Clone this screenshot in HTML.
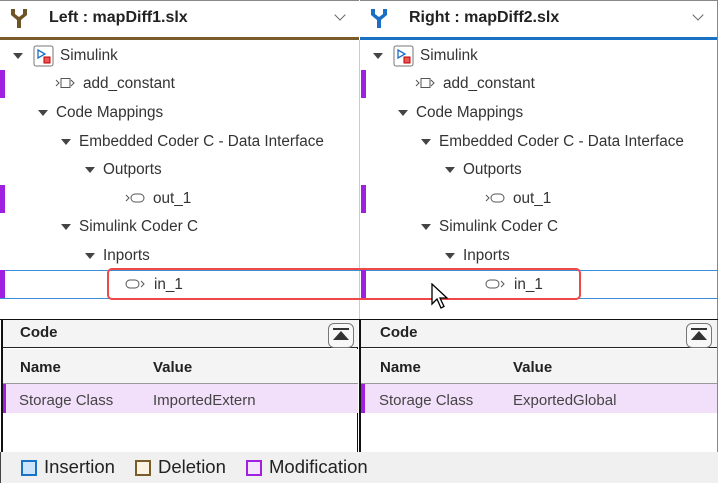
<!DOCTYPE html>
<html><head><style>
*{margin:0;padding:0;box-sizing:border-box}
body{width:718px;height:483px;position:relative;overflow:hidden;background:#fff;font-family:"Liberation Sans",sans-serif;color:#222;font-size:15px}
.abs{position:absolute}
.hdr{top:0;height:37px;background:#fff;font-weight:bold;font-size:16px;color:#111}
.t{position:absolute;white-space:nowrap;line-height:20px}
.tri{display:inline-block;width:0;height:0;border-left:5px solid transparent;border-right:5px solid transparent;border-top:6px solid #444;position:absolute}
.mark{position:absolute;width:5px;height:28px;background:#a020e0}
.chev{position:absolute;width:8px;height:8px;border-right:1.5px solid #666;border-bottom:1.5px solid #666;transform:rotate(45deg)}
</style></head><body>
<div class="abs hdr" style="left:0;width:359px;border-top:1px solid #888"></div>
<div class="abs hdr" style="left:360px;width:358px;border-top:1px solid #888"></div>
<svg class="abs" style="left:8px;top:7px" width="22" height="22" viewBox="0 0 22 22"><path d="M3 2v6l6 5v8h4v-8l6-5V2h-4v5l-4 3-4-3V2z" fill="#6e5526"/></svg>
<svg class="abs" style="left:368px;top:7px" width="22" height="22" viewBox="0 0 22 22"><path d="M3 2v6l6 5v8h4v-8l6-5V2h-4v5l-4 3-4-3V2z" fill="#1a6fc4"/></svg>
<div class="t" style="left:49px;top:8px;font-weight:bold;font-size:16px">Left : mapDiff1.slx</div>
<div class="t" style="left:409px;top:8px;font-weight:bold;font-size:16px">Right : mapDiff2.slx</div>
<div class="chev" style="left:336px;top:11px"></div>
<div class="chev" style="left:694px;top:11px"></div>
<div class="abs" style="left:0;top:37px;width:359px;height:3px;background:#7a5c2a"></div>
<div class="abs" style="left:360px;top:37px;width:358px;height:3px;background:#1a72c4"></div>
<div class="abs" style="left:359px;top:40px;width:1px;height:280px;background:#ccc"></div>
<div class="abs" style="left:717px;top:0;width:1px;height:483px;background:#888"></div>

<div class="abs" style="left:0;top:270px;width:718px;height:1px;background:#3a8fd8"></div>
<div class="abs" style="left:0;top:298px;width:718px;height:1px;background:#3a8fd8"></div>

<div id="L"></div>
<script>
function tree(ox){
 // [triX or null, y, text, textX, icon, iconX]
 var rows=[[13,56,'Simulink',60,'sim',33],[null,84,'add_constant',83,'blk',55],[38,113,'Code Mappings',56],[61,142,'Embedded Coder C - Data Interface',79],[85,170,'Outports',103],[null,199,'out_1',153,'out',125],[61,227,'Simulink Coder C',79],[85,256,'Inports',103],[null,285,'in_1',154,'in',125]];
 var h='';
 rows.forEach(function(r){
  var y=r[1];
  if(r[0]!==null) h+='<span class="tri" style="left:'+(ox+r[0])+'px;top:'+(y-3)+'px"></span>';
  var ix=ox+(r[5]||0);
  if(r[4]=='sim'){h+='<svg class="abs" style="left:'+ix+'px;top:'+(y-11)+'px" width="21" height="22"><rect x="1" y="1" width="19" height="20" rx="2" fill="#fff" stroke="#777"/><path d="M5 5l7 4-7 4z" fill="none" stroke="#1a6fc4" stroke-width="1.3"/><rect x="11" y="12" width="6" height="6" fill="#e55" stroke="#b00"/></svg>';}
  if(r[4]=='blk'){h+='<svg class="abs" style="left:'+ix+'px;top:'+(y-7)+'px" width="22" height="12"><path d="M1 3l3 3-3 3" fill="none" stroke="#555"/><rect x="6" y="1.5" width="9" height="9" fill="none" stroke="#555"/><path d="M16 3l3 3-3 3" fill="none" stroke="#555"/></svg>';}
  if(r[4]=='out'){h+='<svg class="abs" style="left:'+ix+'px;top:'+(y-7)+'px" width="22" height="12"><path d="M1 3l3 3-3 3" fill="none" stroke="#555"/><rect x="6" y="2" width="13" height="8" rx="4" fill="none" stroke="#555"/></svg>';}
  if(r[4]=='in'){h+='<svg class="abs" style="left:'+ix+'px;top:'+(y-7)+'px" width="24" height="12"><rect x="1" y="2" width="13" height="8" rx="4" fill="none" stroke="#555"/><path d="M16 3l3 3-3 3" fill="none" stroke="#555"/></svg>';}
  h+='<div class="t" style="left:'+(ox+r[3])+'px;top:'+(y-10)+'px;color:#333;font-size:15.3px">'+r[2]+'</div>';
 });
 var mx=ox?361:0;
 h+='<div class="mark" style="left:'+mx+'px;top:70px"></div><div class="mark" style="left:'+mx+'px;top:185px"></div><div class="mark" style="left:'+mx+'px;top:270px"></div>';
 return h;
}
document.getElementById('L').innerHTML=tree(0)+tree(360);
</script>

<div class="abs" style="left:107px;top:268px;width:474px;height:32px;border:2.5px solid #f04848;border-radius:5px"></div>
<svg class="abs" style="left:431px;top:283px" width="18" height="28" viewBox="0 0 18 28"><path d="M1 1v20l5-5 4 9 3-1.5-4-8.5h7z" fill="#fff" stroke="#000" stroke-width="1.3"/></svg>

<div class="abs" style="left:0;top:319px;width:718px;height:1px;background:#111"></div>
<div class="abs" style="left:1px;top:320px;width:357px;height:132px;background:#fff;border-left:2px solid #111;border-right:1px solid #111"></div>
<div class="abs" style="left:359px;top:320px;width:358px;height:132px;background:#fff;border-left:2px solid #111"></div>
<div class="abs" style="left:3px;top:320px;width:355px;height:28px;background:#f4f4f4;border-bottom:1px solid #222"></div>
<div class="abs" style="left:361px;top:320px;width:356px;height:28px;background:#f4f4f4;border-bottom:1px solid #222"></div>
<div class="abs" style="left:3px;top:349px;width:355px;height:35px;background:#f4f4f4;border-bottom:1px solid #999"></div>
<div class="abs" style="left:361px;top:349px;width:356px;height:35px;background:#f4f4f4;border-bottom:1px solid #999"></div>
<div class="abs" style="left:3px;top:384px;width:355px;height:29px;background:#f2e0fa"></div>
<div class="abs" style="left:361px;top:384px;width:356px;height:29px;background:#f2e0fa"></div>
<div class="abs" style="left:3px;top:384px;width:3px;height:29px;background:#a020e0"></div>
<div class="abs" style="left:361px;top:384px;width:4px;height:29px;background:#a020e0"></div>
<div class="t" style="left:20px;top:323px;font-weight:bold;font-size:15px">Code</div>
<div class="t" style="left:380px;top:323px;font-weight:bold;font-size:15px">Code</div>
<div class="abs" style="left:328px;top:323px;width:26px;height:25px;border:1px solid #777;border-radius:6px;background:#f8f8f8"></div>
<div class="abs" style="left:686px;top:323px;width:26px;height:25px;border:1px solid #777;border-radius:6px;background:#f8f8f8"></div>
<div class="abs" style="left:333px;top:328px;width:16px;height:2px;background:#333"></div>
<div class="abs" style="left:333px;top:331px;border-left:8px solid transparent;border-right:8px solid transparent;border-bottom:9px solid #333"></div>
<div class="abs" style="left:691px;top:328px;width:16px;height:2px;background:#333"></div>
<div class="abs" style="left:691px;top:331px;border-left:8px solid transparent;border-right:8px solid transparent;border-bottom:9px solid #333"></div>
<div class="t" style="left:20px;top:358px;font-weight:bold">Name</div>
<div class="t" style="left:153px;top:358px;font-weight:bold">Value</div>
<div class="t" style="left:380px;top:358px;font-weight:bold">Name</div>
<div class="t" style="left:513px;top:358px;font-weight:bold">Value</div>
<div class="t" style="left:19px;top:391px;color:#444">Storage Class</div>
<div class="t" style="left:153px;top:391px;color:#444">ImportedExtern</div>
<div class="t" style="left:379px;top:391px;color:#444">Storage Class</div>
<div class="t" style="left:513px;top:391px;color:#444">ExportedGlobal</div>

<div class="abs" style="left:0;top:452px;width:718px;height:31px;background:#f0f0f0;border-left:1px solid #444"></div>
<div class="abs" style="left:21px;top:460px;width:16px;height:16px;background:#cce4fa;border:2px solid #1a72c4"></div>
<div class="t" style="left:44px;top:457px;font-size:18.5px">Insertion</div>
<div class="abs" style="left:135px;top:460px;width:16px;height:16px;background:#fdf3e3;border:2px solid #7a5c2a"></div>
<div class="t" style="left:158px;top:457px;font-size:18.5px">Deletion</div>
<div class="abs" style="left:246px;top:460px;width:16px;height:16px;background:#f4e4fc;border:2px solid #a020e0"></div>
<div class="t" style="left:269px;top:457px;font-size:18.5px">Modification</div>
</body></html>
